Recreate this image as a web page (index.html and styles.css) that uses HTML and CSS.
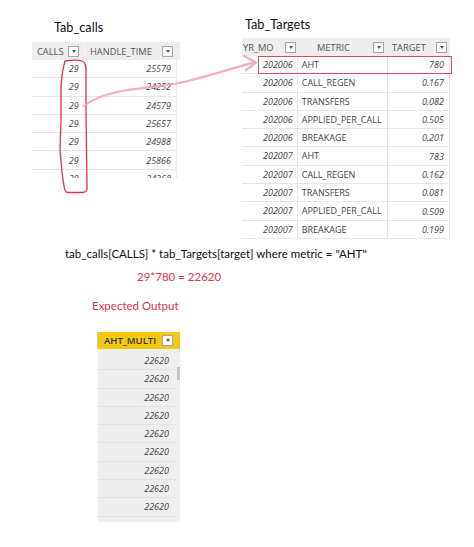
FILE: index.html
```html
<!DOCTYPE html>
<html>
<head>
<meta charset="utf-8">
<link rel="stylesheet" href="styles.css">
</head>
<body>
<div class="page">
  <div class="top">
    <section class="calls">
      <h2 class="title">Tab_calls</h2>
      <div class="tbl calls-tbl">
        <div class="hdr">
          <div class="hc c1"><span>CALLS</span><i class="dd"></i></div>
          <div class="hc c2"><span>HANDLE_TIME</span><i class="dd"></i></div>
        </div>
        <div class="row"><div class="c1 num">29</div><div class="c2 num">25579</div></div>
        <div class="row"><div class="c1 num">29</div><div class="c2 num">24252</div></div>
        <div class="row"><div class="c1 num">29</div><div class="c2 num">24579</div></div>
        <div class="row"><div class="c1 num">29</div><div class="c2 num">25657</div></div>
        <div class="row"><div class="c1 num">29</div><div class="c2 num">24988</div></div>
        <div class="row"><div class="c1 num">29</div><div class="c2 num">25866</div></div>
        <div class="row"><div class="c1 num">29</div><div class="c2 num">24368</div></div>
      </div>
    </section>
    <section class="targets">
      <h2 class="title">Tab_Targets</h2>
      <div class="tbl tgt-tbl">
        <div class="hdr">
          <div class="hc t1"><span>YR_MO</span><i class="dd"></i></div>
          <div class="hc t2"><span>METRIC</span><i class="dd"></i></div>
          <div class="hc t3"><span>TARGET</span><i class="dd"></i></div>
        </div>
        <div class="row"><div class="t1 num">202006</div><div class="t2 txt">AHT</div><div class="t3 num">780</div></div>
        <div class="row"><div class="t1 num">202006</div><div class="t2 txt">CALL_REGEN</div><div class="t3 num">0.167</div></div>
        <div class="row"><div class="t1 num">202006</div><div class="t2 txt">TRANSFERS</div><div class="t3 num">0.082</div></div>
        <div class="row"><div class="t1 num">202006</div><div class="t2 txt">APPLIED_PER_CALL</div><div class="t3 num">0.505</div></div>
        <div class="row"><div class="t1 num">202006</div><div class="t2 txt">BREAKAGE</div><div class="t3 num">0.201</div></div>
        <div class="row"><div class="t1 num">202007</div><div class="t2 txt">AHT</div><div class="t3 num">783</div></div>
        <div class="row"><div class="t1 num">202007</div><div class="t2 txt">CALL_REGEN</div><div class="t3 num">0.162</div></div>
        <div class="row"><div class="t1 num">202007</div><div class="t2 txt">TRANSFERS</div><div class="t3 num">0.081</div></div>
        <div class="row"><div class="t1 num">202007</div><div class="t2 txt">APPLIED_PER_CALL</div><div class="t3 num">0.509</div></div>
        <div class="row"><div class="t1 num">202007</div><div class="t2 txt">BREAKAGE</div><div class="t3 num">0.199</div></div>
        <div class="hl-box"></div>
      </div>
    </section>
  </div>

  <p class="formula">tab_calls[CALLS] * tab_Targets[target] where metric = "AHT"</p>
  <p class="calc">29*780 = 22620</p>
  <p class="expected">Expected Output</p>

  <div class="aht">
    <div class="aht-hdr"><span>AHT_MULTI</span><i class="dd"></i></div>
    <div class="aht-body">
      <div class="arow">22620</div>
      <div class="arow">22620</div>
      <div class="arow">22620</div>
      <div class="arow">22620</div>
      <div class="arow">22620</div>
      <div class="arow">22620</div>
      <div class="arow">22620</div>
      <div class="arow">22620</div>
      <div class="arow">22620</div>
      <div class="thumb"></div>
    </div>
  </div>

  <svg class="ink" width="474" height="547" viewBox="0 0 474 547">
    <path class="loop" d="M65 61 C72 60 80 60 83 61.5 C86 63 86 67 86 72 L86 110 L86.5 150 L87 188 C87 191 85 192.5 82 192.5 L68 192.5 C65.5 192.5 64.5 190 64 186 L62 172 L60 150 L61 120 L61 92 C61 80 62.5 70 65 61 Z"/>
    <path class="arrow" d="M84 106 C94 98 108 93 128 90 C148 87 168 86 188 81 C208 76 228 70 255 62"/>
    <path class="arrow" d="M244 56 L256 62.5 L246 70"/>
  </svg>
</div>
</body>
</html>
```
FILE: styles.css
```css
* { box-sizing: border-box; }
html, body { margin: 0; padding: 0; background: #fff; }
.page {
  position: relative;
  width: 474px;
  height: 547px;
  overflow: hidden;
  font-family: "Open Sans", "Noto Sans", sans-serif;
  color: #333;
}
.top { display: flex; align-items: flex-start; }
.title {
  margin: 0;
  font-family: Lato, "Open Sans", sans-serif;
  font-weight: normal;
  font-size: 12.7px;
  color: #111;
}
.calls { margin-left: 32px; width: 148px; padding-top: 16px; }
.calls .title { margin: 0 0 4px 22px; line-height: 22px; }
.targets { margin-left: 62px; width: 208px; padding-top: 14px; }
.targets .title { margin: 0 0 3px 3px; line-height: 21px; }

.tbl { position: relative; font-size: 9px; }
.hdr {
  display: flex;
  height: 18px;
  background: #eeeeee;
  color: #555;
  font-size: 9.3px;
}
.hc {
  display: flex;
  align-items: center;
  justify-content: space-between;
  height: 100%;
}
.dd {
  display: flex;
  align-items: center;
  justify-content: center;
  width: 11px;
  height: 11px;
  background: #fff;
  border: 1px solid #a6a6a6;
}
.dd::after {
  content: "";
  border-left: 2.5px solid transparent;
  border-right: 2.5px solid transparent;
  border-top: 3px solid #555;
}
.row {
  display: flex;
  height: 18.3px;
  border-bottom: 1px solid #e6e6e6;
  align-items: center;
}
.num { font-style: italic; text-align: right; color: #444; }
.txt { color: #444; padding-left: 4px; white-space: nowrap; }

/* calls table */
.calls-tbl { height: 136px; overflow: hidden; }
.calls-tbl .row { width: 145px; border-right: 1px solid #e8e8e8; }
.calls-tbl .c1 { width: 53px; }
.calls-tbl .c2 { width: 95px; }
.calls-tbl .hc.c1 { padding: 0 5px 0 5px; border-right: 1px solid #f8f8f8; }
.calls-tbl .hc.c2 { padding: 0 7px 0 5px; }
.calls-tbl .row .c1 { padding-right: 6px; }
.calls-tbl .row .c2 { width: 92px; padding-right: 5px; }

/* targets table */
.tgt-tbl .t1 { width: 56px; }
.tgt-tbl .t2 { width: 91px; }
.tgt-tbl .t3 { width: 61px; }
.tgt-tbl .hc.t1 { padding: 0 2px 0 1px; }
.tgt-tbl .hc.t2 { padding: 0 5px 0 19px; }
.tgt-tbl .hc.t3 { padding: 0 3px 0 3px; }
.tgt-tbl .row { width: 208px; border-right: 1px solid #e6e6e6; }
.tgt-tbl .row .t1 { padding-right: 4px; border-right: 1px solid #e6e6e6; height: 100%; line-height: 17.3px; }
.tgt-tbl .row .t2 { border-right: 1px solid #e6e6e6; height: 100%; line-height: 17.3px; overflow: hidden; }
.tgt-tbl .row .t3 { padding-right: 5px; }
.hl-box {
  position: absolute;
  left: 16px;
  top: 18px;
  width: 194px;
  height: 18px;
  border: 1.5px solid #d84a5c;
}

/* texts */
.formula, .calc, .expected {
  font-family: Lato, "Open Sans", sans-serif;
  font-size: 11.5px;
  line-height: 16px;
}
.formula { margin: 7px 0 0 65px; color: #111; }
.calc { margin: 7px 0 0 137px; color: #e2333f; }
.expected { margin: 13px 0 0 92px; color: #e2333f; }

/* AHT table */
.aht { margin: 18px 0 0 97px; width: 83px; font-size: 9px; }
.aht-hdr {
  display: flex;
  align-items: center;
  justify-content: space-between;
  height: 17px;
  padding: 0 7px 0 6px;
  background: #f2c811;
  border-left: 1px solid #c8c8c8;
  font-size: 9.5px;
  font-weight: 600;
  color: #333;
}
.aht-body {
  position: relative;
  background: #eeeeee;
  padding: 3px 0 5px 0;
  margin-left: 1px;
}
.arow {
  height: 18.3px;
  line-height: 17.3px;
  border-bottom: 1px solid #e0e0e0;
  text-align: right;
  padding-right: 8px;
  font-style: italic;
  color: #444;
  width: 79px;
}
.thumb {
  position: absolute;
  right: 0;
  top: 18px;
  width: 3px;
  height: 13px;
  background: #c6c6c6;
}

/* hand-drawn ink overlay */
.ink { position: absolute; left: 0; top: 0; pointer-events: none; }
.loop { fill: none; stroke: #d9364e; stroke-width: 1.3; stroke-linejoin: round; }
.arrow { fill: none; stroke: #f2a0b1; stroke-width: 2.2; stroke-linecap: round; stroke-linejoin: round; opacity: 0.85; }
```
